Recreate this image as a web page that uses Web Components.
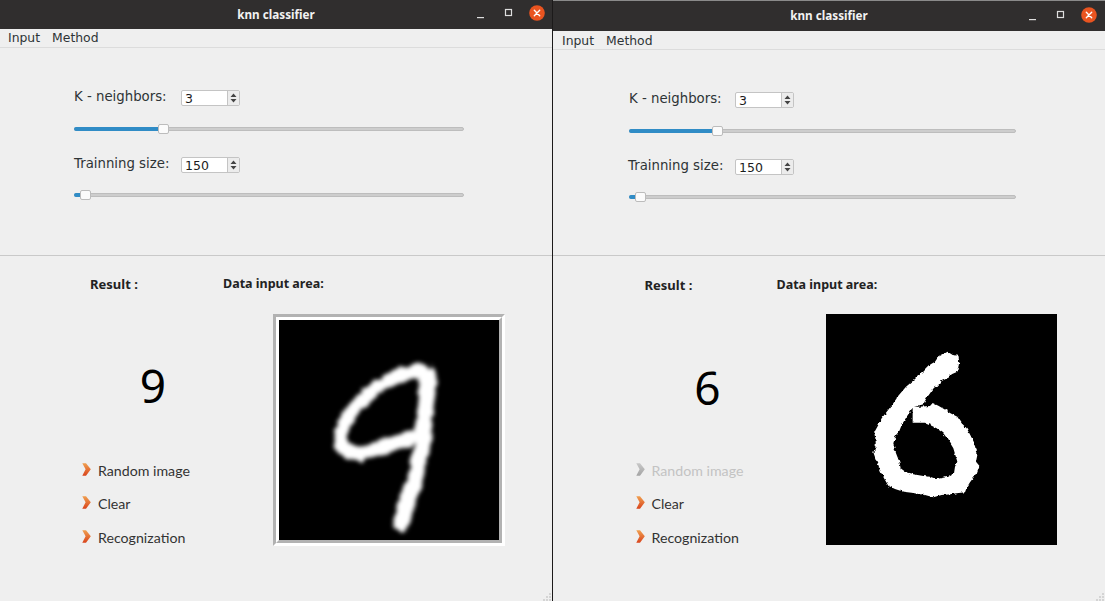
<!DOCTYPE html>
<html>
<head>
<meta charset="utf-8">
<title>knn classifier</title>
<style>
  html, body { margin: 0; height: 100%; overflow: hidden; background: #1c1a1a; }
  knn-window.a { left: 0; top: 0; }
  knn-window.b { left: 553px; top: 0; --title-h: 31px; --title-edge: 1px; --ctl-x: 8px; --top-h: 205px; --inset: 2px; --bottom-nudge: 1px; --digit-nudge: 1px; --digit-w: 144px; --res-x: 9px; --img-x: 49px; --slider-w: 387px; --lbl-w: 106px; --menu-x: 9px; --menu-y: 1px; }
</style>
</head>
<body>

<template id="window-tpl">
  <style>
    :host { position: absolute; display: flex; flex-direction: column; width: 552px; height: 601px; background: #efefef; overflow: hidden; font-family: "DejaVu Sans", sans-serif; color: #2e3436; }
    .top { height: var(--top-h, 207px); box-sizing: border-box; padding: 42px 0 0 calc(74px + var(--inset, 0px)); display: flex; flex-direction: column; }
    .divider { height: 1px; background: #c9c9c9; }
    .bottom { flex: 1; display: grid; grid-template-columns: 141px 1fr; padding: calc(19px + var(--bottom-nudge, 0px)) 0 0 calc(82px + var(--inset, 0px) * .25); }
    .grip { position: absolute; right: 0; bottom: 0; }
  </style>
  <knn-titlebar><slot name="title"></slot></knn-titlebar>
  <knn-menubar></knn-menubar>
  <div class="top"><slot name="controls"></slot></div>
  <div class="divider"></div>
  <div class="bottom">
    <slot name="left"></slot>
    <slot name="right"></slot>
  </div>
  <svg class="grip" width="11" height="9" viewBox="0 0 11 9" fill="#d4d4d4">
    <rect x="8" y="1" width="2" height="2"/><rect x="5" y="4" width="2" height="2"/><rect x="8" y="4" width="2" height="2"/>
    <rect x="2" y="7" width="2" height="2"/><rect x="5" y="7" width="2" height="2"/><rect x="8" y="7" width="2" height="2"/>
  </svg>
</template>

<template id="titlebar-tpl">
  <style>
    :host { display: flex; position: relative; align-items: center; justify-content: center; height: var(--title-h, 29px); box-sizing: border-box; padding-bottom: 2px; background: #302e2e; border-top: var(--title-edge, 0) solid #8a8a8a; color: #f2f2f2; font: bold 11.7px "Noto Sans", sans-serif; }
    .ctl { position: absolute; right: var(--ctl-x, 7px); bottom: 8px; display: flex; align-items: center; gap: 12px; }
    svg { display: block; }
  </style>
  <slot></slot>
  <div class="ctl">
    <svg width="16" height="16" viewBox="0 0 16 16"><rect x="4" y="12" width="7" height="1.2" fill="#dedede"/></svg>
    <svg width="16" height="16" viewBox="0 0 16 16"><rect x="4.5" y="4.5" width="6" height="6" fill="none" stroke="#dedede" stroke-width="1.2"/></svg>
    <svg width="16" height="16" viewBox="0 0 16 16"><circle cx="8" cy="8" r="7.8" fill="#e95420"/><path d="M5.3 5.3l5.4 5.4M10.7 5.3l-5.4 5.4" stroke="#fff" stroke-width="1.4" stroke-linecap="round"/></svg>
  </div>
</template>

<template id="menubar-tpl">
  <style>
    :host { display: flex; gap: 12px; height: 19px; box-sizing: border-box; padding: var(--menu-y, 0) 0 0 var(--menu-x, 8px); border-bottom: 1px solid #dcdcdc; font: 12.4px/17px "DejaVu Sans", sans-serif; color: #2e3436; }
  </style>
  <span>Input</span><span>Method</span>
</template>

<template id="field-tpl">
  <style>
    :host { display: flex; align-items: center; height: 16px; font: 13.3px/16px "DejaVu Sans", sans-serif; color: #2e3436; }
    .lbl { width: calc(var(--lbl-w, 107px) - var(--lbl-x, 0px)); margin-left: var(--lbl-x, 0px); position: relative; top: -1px; white-space: nowrap; }
  </style>
  <span class="lbl"><slot></slot></span>
  <knn-spin></knn-spin>
</template>

<template id="spin-tpl">
  <style>
    :host { display: flex; width: 59px; height: 16px; box-sizing: border-box; border: 1px solid #c4c4c4; border-radius: 2px; background: #fff; font: 12.5px/15px "DejaVu Sans", sans-serif; color: #1c1c1c; overflow: hidden; }
    .val { flex: 1; padding: 0 0 0 3px; }
    .arrows { width: 11px; background: #ececec; border-left: 1px solid #c4c4c4; display: flex; align-items: center; justify-content: center; }
  </style>
  <span class="val"></span>
  <span class="arrows">
    <svg width="7" height="10" viewBox="0 0 7 10" fill="#444"><path d="M3.5 0.5L6.5 4H.5zM3.5 9.5L.5 6h6z"/></svg>
  </span>
</template>

<template id="slider-tpl">
  <style>
    :host { display: block; position: relative; width: var(--slider-w, 390px); height: 12px; }
    .groove { position: absolute; left: 0; right: 0; top: 4px; height: 4px; box-sizing: border-box; background: #cdcdcd; border: 1px solid #bdbdbd; border-radius: 2px; }
    .fill { position: absolute; left: 0; top: 4px; height: 4px; background: #308cc6; border-radius: 2px 0 0 2px; }
    .thumb { position: absolute; top: 1px; width: 11px; height: 10px; box-sizing: border-box; background: #fbfbfb; border: 1px solid #bcbcbc; border-radius: 2px; }
  </style>
  <div class="groove"></div>
  <div class="fill"></div>
  <div class="thumb"></div>
</template>

<template id="button-tpl">
  <style>
    :host { display: flex; align-items: center; gap: 7px; height: 33.3px; font: 14.2px Lato, sans-serif; color: #333; white-space: nowrap; }
    :host([disabled]) { color: #c3c3c3; }
    svg { display: block; position: relative; top: -1px; }
  </style>
  <svg width="9" height="13" viewBox="0 0 9 13">
    <defs>
      <linearGradient id="on" x1="0" y1="0" x2="0" y2="1"><stop offset="0" stop-color="#f0a050"/><stop offset="1" stop-color="#d9441c"/></linearGradient>
      <linearGradient id="off" x1="0" y1="0" x2="0" y2="1"><stop offset="0" stop-color="#c8c8c8"/><stop offset="1" stop-color="#a4a4a4"/></linearGradient>
    </defs>
    <path class="chev" d="M0.3 0.3h3.7L8.8 6.3L4 12.7H0.3L3.6 6.3z"/>
  </svg>
  <span><slot></slot></span>
</template>

<template id="result-tpl">
  <style>
    :host { display: flex; flex-direction: column; }
    .h { font: bold 13px/18px "Noto Sans", sans-serif; color: #222; margin-left: var(--res-x, 8px); }
    .digit { font: 46px/60px "Noto Sans", sans-serif; color: #000; width: var(--digit-w, 142px); text-align: center; margin-top: calc(62px + var(--digit-nudge, 0px)); }
    .btns { margin-top: calc(39px - var(--digit-nudge, 0px) * 2); display: flex; flex-direction: column; }
  </style>
  <div class="h">Result :</div>
  <div class="digit"><slot name="digit"></slot></div>
  <div class="btns"><slot></slot></div>
</template>

<template id="canvas-tpl">
  <style>
    :host { display: flex; flex-direction: column; }
    .h { font: bold 12.5px/18px "Noto Sans", sans-serif; color: #222; }
    .pic { margin: calc(21px - var(--bottom-nudge, 0px)) 0 0 var(--img-x, 50px); width: 231px; height: 231px; box-sizing: border-box; background: #000; }
    :host([framed]) .pic { width: 232px; height: 232px; border: 3px solid; border-color: #b2b2b2 #fff #fff #b2b2b2; }
    :host([framed]) .in { box-sizing: border-box; border: 3px solid; border-color: #fff #b2b2b2 #b2b2b2 #fff; background: #000; }
    .in { height: 100%; }
    ::slotted(svg) { display: block; width: 100%; height: 100%; }
  </style>
  <div class="h">Data input area:</div>
  <div class="pic"><div class="in"><slot></slot></div></div>
</template>

<knn-window class="a">
  <span slot="title">knn classifier</span>
  <div slot="controls">
    <knn-field value="3">K - neighbors:</knn-field>
    <knn-slider pos="84" style="margin-top:17px"></knn-slider>
    <knn-field value="150" style="margin-top:22px">Trainning size:</knn-field>
    <knn-slider pos="6" style="margin-top:16px"></knn-slider>
  </div>
  <knn-result slot="left">
    <span slot="digit">9</span>
    <knn-button>Random image</knn-button>
    <knn-button>Clear</knn-button>
    <knn-button>Recognization</knn-button>
  </knn-result>
  <knn-canvas slot="right" framed>
    <svg viewBox="58 60 658 658">
      <filter id="soft" x="-20%" y="-20%" width="140%" height="140%">
        <feTurbulence type="fractalNoise" baseFrequency="0.035" numOctaves="2" seed="4" result="n"/>
        <feDisplacementMap in="SourceGraphic" in2="n" scale="22" xChannelSelector="R" yChannelSelector="G"/>
        <feGaussianBlur stdDeviation="7"/>
      </filter>
      <g filter="url(#soft)" fill="none" stroke="#fff" stroke-linecap="round" stroke-linejoin="round">
        <path stroke-width="42" d="M458 408C420 428 375 436 335 450C295 472 255 460 243 425C236 392 262 345 302 303C345 262 395 232 445 218C475 208 498 205 505 225"/>
        <path stroke-width="50" d="M503 225C508 270 497 330 490 385C489 440 478 490 462 540C452 575 436 605 425 668"/>
        <circle cx="432" cy="615" r="23" fill="#fff" stroke="none"/>
        <circle cx="422" cy="668" r="24" fill="#fff" stroke="none"/>
      </g>
    </svg>
  </knn-canvas>
</knn-window>

<knn-window class="b">
  <span slot="title">knn classifier</span>
  <div slot="controls">
    <knn-field value="3">K - neighbors:</knn-field>
    <knn-slider pos="83" style="margin-top:17px"></knn-slider>
    <knn-field value="150" style="margin-top:22px;--lbl-x:-1px">Trainning size:</knn-field>
    <knn-slider pos="6" style="margin-top:16px"></knn-slider>
  </div>
  <knn-result slot="left">
    <span slot="digit">6</span>
    <knn-button disabled>Random image</knn-button>
    <knn-button>Clear</knn-button>
    <knn-button>Recognization</knn-button>
  </knn-result>
  <knn-canvas slot="right">
    <svg viewBox="-132 -93 693 693">
      <filter id="rough" x="-10%" y="-10%" width="120%" height="120%">
        <feTurbulence type="fractalNoise" baseFrequency="0.09" numOctaves="2" seed="7" result="n"/>
        <feDisplacementMap in="SourceGraphic" in2="n" scale="10" xChannelSelector="R" yChannelSelector="G"/>
      </filter>
      <path filter="url(#rough)" fill="#fff" fill-rule="evenodd"
        d="M233 20L248 30L265 32L268 52L262 80L245 88L238 97L215 108L203 122L192 128L178 148L170 158L160 178L132 186L180 183L188 174L205 182L222 192L240 204L262 215L275 235L290 250L302 272L312 292L318 320L322 330L318 350L328 362L320 385L310 398L300 412L290 428L285 442L260 445L240 448L215 450L190 457L165 450L150 448L125 443L100 440L75 432L55 422L42 400L32 380L25 360L18 345L10 322L17 305L17 290L13 262L25 240L35 220L52 198L70 175L85 152L108 125L132 105L142 95L160 80L170 70L182 58L195 50L205 35L215 30Z
           M128 188L128 233L165 233L180 240L200 250L220 265L235 285L250 310L262 350L255 365L252 385L235 395L200 402L180 395L160 393L130 388L108 382L92 370L88 350L78 325L70 295L78 270L88 258L95 240L110 215Z"/>
    </svg>
  </knn-canvas>
</knn-window>

<script>
  // small helper so every element stamps its own template into an open shadow root
  function stamp(el, id) {
    const root = el.attachShadow({ mode: "open" });
    root.appendChild(document.getElementById(id).content.cloneNode(true));
    return root;
  }

  class KnnWindow extends HTMLElement {
    constructor() { super(); stamp(this, "window-tpl"); }
  }
  class KnnTitlebar extends HTMLElement {
    constructor() { super(); stamp(this, "titlebar-tpl"); }
  }
  class KnnMenubar extends HTMLElement {
    constructor() { super(); stamp(this, "menubar-tpl"); }
  }
  class KnnSpin extends HTMLElement {
    constructor() { super(); stamp(this, "spin-tpl"); }
    set value(v) { this.shadowRoot.querySelector(".val").textContent = v; }
  }
  class KnnField extends HTMLElement {
    constructor() { super(); stamp(this, "field-tpl"); }
    connectedCallback() {
      this.shadowRoot.querySelector("knn-spin").value = this.getAttribute("value");
    }
  }
  class KnnSlider extends HTMLElement {
    constructor() { super(); stamp(this, "slider-tpl"); }
    connectedCallback() {
      const pos = Number(this.getAttribute("pos"));
      this.shadowRoot.querySelector(".fill").style.width = pos + "px";
      this.shadowRoot.querySelector(".thumb").style.left = pos + "px";
    }
  }
  class KnnButton extends HTMLElement {
    constructor() { super(); stamp(this, "button-tpl"); }
    connectedCallback() {
      const grad = this.hasAttribute("disabled") ? "off" : "on";
      this.shadowRoot.querySelector(".chev").setAttribute("fill", `url(#${grad})`);
    }
  }
  class KnnResult extends HTMLElement {
    constructor() { super(); stamp(this, "result-tpl"); }
  }
  class KnnCanvas extends HTMLElement {
    constructor() { super(); stamp(this, "canvas-tpl"); }
  }

  customElements.define("knn-window", KnnWindow);
  customElements.define("knn-titlebar", KnnTitlebar);
  customElements.define("knn-menubar", KnnMenubar);
  customElements.define("knn-spin", KnnSpin);
  customElements.define("knn-field", KnnField);
  customElements.define("knn-slider", KnnSlider);
  customElements.define("knn-button", KnnButton);
  customElements.define("knn-result", KnnResult);
  customElements.define("knn-canvas", KnnCanvas);
</script>
</body>
</html>
